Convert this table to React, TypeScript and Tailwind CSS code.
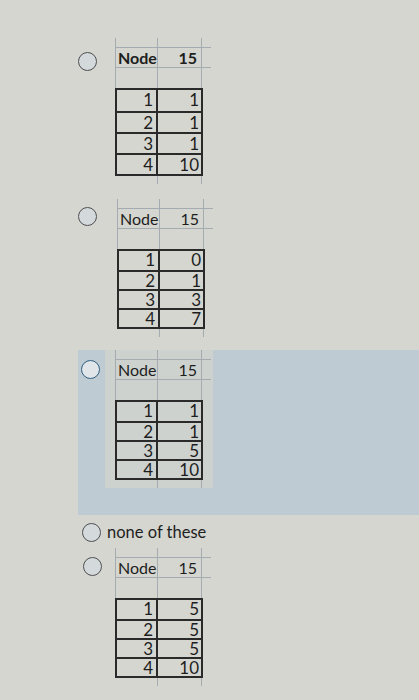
import React from "react";

type Row = [string, string];

function Radio({ blue }: { blue?: boolean }) {
  return (
    <div
      className={
        blue
          ? "w-[19px] h-[19px] rounded-full border-[1.5px] border-[#2f5f80] bg-[#dfe5e8] shrink-0"
          : "w-[19px] h-[19px] rounded-full border-[1.5px] border-[#4d4f52] bg-[#d4d9dc] shrink-0"
      }
    />
  );
}

function Sheet({ rows, bold, tall }: { rows: Row[]; bold?: boolean; tall?: boolean }) {
  const line = "border-[#a4abb1]";
  const rowH = tall ? "h-[21px] leading-[20px]" : "h-[19px] leading-[18px]";
  return (
    <div className="w-[96px] shrink-0">
      <div className="h-[9px] flex">
        <div className={`w-[43px] border-l border-r ${line}`} />
        <div className={`w-[44px] border-r ${line}`} />
      </div>
      <div className={`h-[21px] flex border-t border-b ${line}`}>
        <div
          className={`w-[43px] border-l border-r ${line} pl-[2px] text-[16px] leading-[20px] ${
            bold ? "font-bold text-[15px]" : ""
          }`}
        >
          Node
        </div>
        <div
          className={`w-[44px] border-r ${line} pr-[4px] text-right text-[16px] leading-[20px] ${
            bold ? "font-bold" : ""
          }`}
        >
          15
        </div>
      </div>
      <div className="h-[20px] flex">
        <div className={`w-[43px] border-l border-r ${line}`} />
        <div className={`w-[44px] border-r ${line}`} />
      </div>
      <div className="w-[88px] border-2 border-[#2a2a2a]">
        {rows.map((r, i) => (
          <div
            key={i}
            className={`${rowH} flex text-[17px] ${
              i > 0 ? "border-t-2 border-[#2a2a2a]" : ""
            }`}
          >
            <div className="w-[41px] border-r-2 border-[#2a2a2a] text-right pr-[3px]">
              {r[0]}
            </div>
            <div className="flex-1 text-right pr-[2px]">{r[1]}</div>
          </div>
        ))}
      </div>
      <div className="h-[8px] flex">
        <div className={`w-[43px] border-r ${line}`} />
        <div className={`w-[44px] border-r ${line}`} />
      </div>
    </div>
  );
}

export default function App() {
  return (
    <div className="w-[419px] h-[700px] overflow-hidden bg-[#d5d6d0] font-['Lato','Open_Sans',sans-serif] text-[#1e1e1e]">
      <div className="pt-[38px]">
        {/* Option 1 */}
        <div className="flex items-start pl-[78px]">
          <div className="mt-[14px]">
            <Radio />
          </div>
          <div className="ml-[18px]">
            <Sheet
              bold
              tall
              rows={[
                ["1", "1"],
                ["2", "1"],
                ["3", "1"],
                ["4", "10"],
              ]}
            />
          </div>
        </div>

        {/* Option 2 */}
        <div className="flex items-start pl-[78px] mt-[15px]">
          <div className="mt-[8px]">
            <Radio />
          </div>
          <div className="ml-[20px]">
            <Sheet
              rows={[
                ["1", "0"],
                ["2", "1"],
                ["3", "3"],
                ["4", "7"],
              ]}
            />
          </div>
        </div>

        {/* Option 3 (highlighted) */}
        <div className="ml-[78px] mt-[13px] h-[165px] bg-[#bfcbd2] flex items-start">
          <div className="w-[27px] pl-[3px] pt-[10px]">
            <Radio blue />
          </div>
          <div className="bg-[#cdd2cf] pl-[10px] pr-[2px] h-[138px]">
            <Sheet
              rows={[
                ["1", "1"],
                ["2", "1"],
                ["3", "5"],
                ["4", "10"],
              ]}
            />
          </div>
        </div>

        {/* Option 4 */}
        <div className="flex items-center pl-[82px] mt-[8px] h-[19px]">
          <Radio />
          <span className="ml-[6px] text-[16.5px] leading-[19px]">none of these</span>
        </div>

        {/* Option 5 */}
        <div className="flex items-start pl-[83px] mt-[6px]">
          <div className="mt-[9px]">
            <Radio />
          </div>
          <div className="ml-[13px]">
            <Sheet
              rows={[
                ["1", "5"],
                ["2", "5"],
                ["3", "5"],
                ["4", "10"],
              ]}
            />
          </div>
        </div>
      </div>
    </div>
  );
}
